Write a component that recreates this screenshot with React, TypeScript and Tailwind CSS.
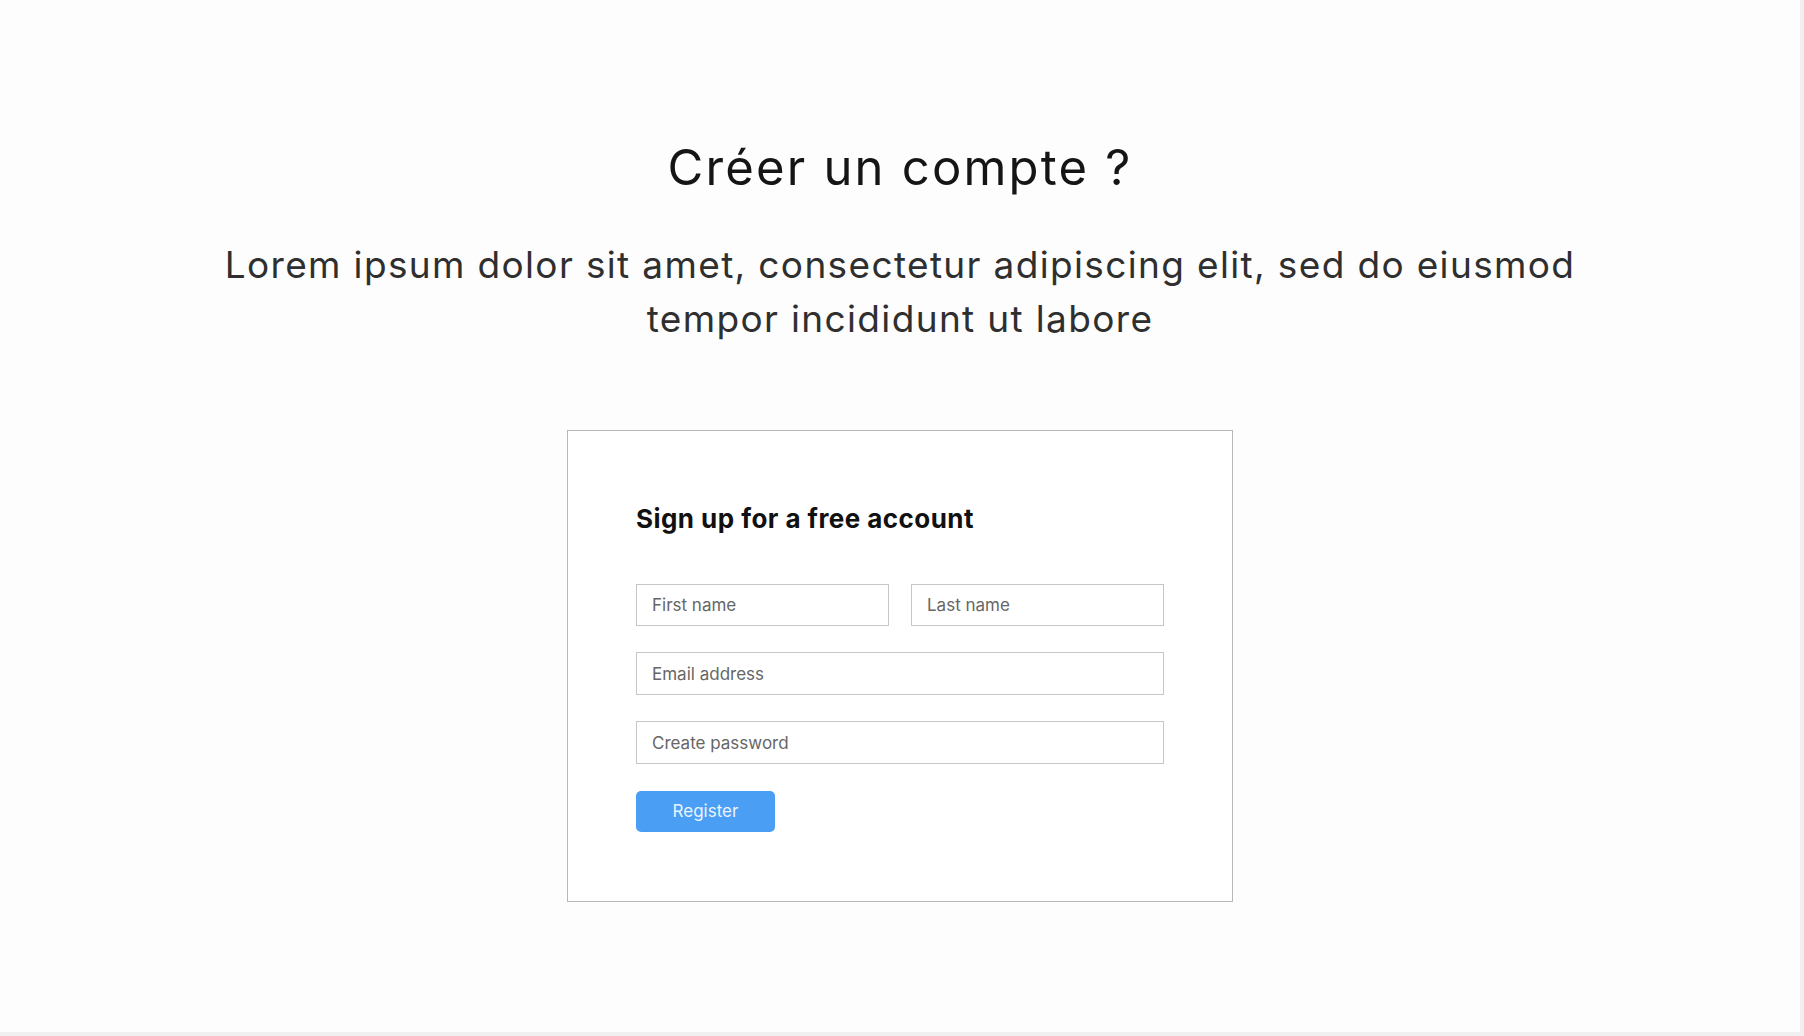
import React from 'react';

const font = { fontFamily: 'Inter, "Open Sans", sans-serif' };

export default function App() {
    return (
        <div
            className="h-screen w-full overflow-hidden bg-[#fdfdfd] border-r-4 border-b-4 border-[#f0f0f0] text-[#111]"
            style={font}
        >
            <div className="flex flex-col items-center pt-[138px]">
                {/* Heading */}
                <h1 className="text-[49px] leading-[59px] font-normal tracking-[2.2px] text-[#151515]">Créer un compte ?</h1>
                <p className="mt-[41px] text-center text-[37px] leading-[54px] tracking-[1.35px] text-[#2f2f2f]">
                    Lorem ipsum dolor sit amet, consectetur adipiscing elit, sed do eiusmod
                    <br />
                    tempor incididunt ut labore
                </p>

                {/* Form card */}
                <div className="mt-[84px] w-[666px] border border-[#b8b8b8] bg-white px-[68px] pt-[72px] pb-[69px]">
                    <h2 className="text-[26px] leading-[32px] font-bold tracking-[0.45px] text-[#111]">Sign up for a free account</h2>

                    <form className="mt-[49px] flex flex-col gap-[26px]" onSubmit={(e) => e.preventDefault()}>
                        <div className="flex gap-[22px]">
                            <input
                                type="text"
                                placeholder="First name"
                                className="h-[42px] w-full min-w-0 border border-[#c6c6c6] bg-white px-[15px] text-[17px] text-[#333] placeholder:text-[#666] outline-none"
                            />
                            <input
                                type="text"
                                placeholder="Last name"
                                className="h-[42px] w-full min-w-0 border border-[#c6c6c6] bg-white px-[15px] text-[17px] text-[#333] placeholder:text-[#666] outline-none"
                            />
                        </div>
                        <input
                            type="email"
                            placeholder="Email address"
                            className="h-[43px] w-full border border-[#c6c6c6] bg-white px-[15px] text-[17px] text-[#333] placeholder:text-[#666] outline-none"
                        />
                        <input
                            type="password"
                            placeholder="Create password"
                            className="h-[43px] w-full border border-[#c6c6c6] bg-white px-[15px] text-[17px] text-[#333] placeholder:text-[#666] outline-none"
                        />
                        <button
                            type="submit"
                            className="mt-px h-[41px] w-[139px] rounded-[5px] bg-[#4a9ff5] text-[17px] text-[#eaf3fe]"
                        >
                            Register
                        </button>
                    </form>
                </div>
            </div>
        </div>
    );
}
